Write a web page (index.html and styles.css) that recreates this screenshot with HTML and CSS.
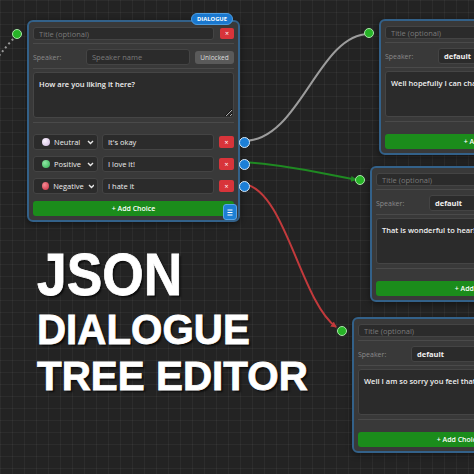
FILE: index.html
```html
<!DOCTYPE html>
<html>
<head>
    <title>JSON Dialogue Tree Editor</title>
    <link rel="stylesheet" href="styles.css">
</head>
<body>

<div class="canvas">
    <svg class="links" width="474" height="474">
        <defs>
            <marker id="arrow-green" viewBox="0 0 6 6" refX="5" refY="3" markerWidth="6" markerHeight="6" markerUnits="userSpaceOnUse" orient="auto">
                <path d="M0 0 L6 3 L0 6 z" fill="#1f8a22"></path>
            </marker>
            <marker id="arrow-red" viewBox="0 0 6 6" refX="5" refY="3" markerWidth="6" markerHeight="6" markerUnits="userSpaceOnUse" orient="auto">
                <path d="M0 0 L6 3 L0 6 z" fill="#c23a3c"></path>
            </marker>
        </defs>
        <path class="link link-in" d="M -4 60 Q 6 46 16 36"></path>
        <path class="link link-neutral" d="M 244 141 C 300 141, 318 34, 369 34"></path>
        <path class="link link-positive" d="M 244 162 C 300 166, 330 176, 356 179.5" marker-end="url(#arrow-green)"></path>
        <path class="link link-negative" d="M 244 184 C 285 190, 300 300, 336 327" marker-end="url(#arrow-red)"></path>
    </svg>

    <div class="node node-start">
        <span class="badge">DIALOGUE</span>
        <span class="port-in"></span>

        <div class="section title-row">
            <input class="field grow" type="text" placeholder="Title (optional)">
            <button class="del">×</button>
        </div>

        <div class="section speaker-row">
            <label class="speaker-label">Speaker:</label>
            <input class="field grow" type="text" placeholder="Speaker name">
            <button class="lock">Unlocked</button>
        </div>

        <div class="section text-row">
            <textarea class="line">How are you liking it here?</textarea>
        </div>

        <div class="choices">
            <div class="choice">
                <div class="mood"><span class="dot dot-neutral"></span>Neutral<svg class="chev" width="7" height="5"><path d="M1 1 L3.5 3.5 L6 1"></path></svg></div>
                <input class="field grow" type="text" value="It's okay">
                <button class="del">×</button>
                <span class="port-out"></span>
            </div>
            <div class="choice">
                <div class="mood"><span class="dot dot-positive"></span>Positive<svg class="chev" width="7" height="5"><path d="M1 1 L3.5 3.5 L6 1"></path></svg></div>
                <input class="field grow" type="text" value="I love it!">
                <button class="del">×</button>
                <span class="port-out"></span>
            </div>
            <div class="choice">
                <div class="mood"><span class="dot dot-negative"></span>Negative<svg class="chev" width="7" height="5"><path d="M1 1 L3.5 3.5 L6 1"></path></svg></div>
                <input class="field grow" type="text" value="I hate it">
                <button class="del">×</button>
                <span class="port-out"></span>
            </div>
            <button class="add">+ Add Choice</button>
        </div>

        <button class="menu">
            <svg width="6" height="7"><path d="M0.5 1 H5.5 M0.5 3.5 H5.5 M0.5 6 H5.5"></path></svg>
        </button>
    </div>

    <div class="node node-hope">
        <span class="port-in"></span>
        <div class="section title-row">
            <input class="field grow" type="text" placeholder="Title (optional)">
            <button class="del">×</button>
        </div>
        <div class="section speaker-row">
            <label class="speaker-label">Speaker:</label>
            <div class="picker">default</div>
        </div>
        <div class="section text-row">
            <textarea class="line">Well hopefully I can change your mind</textarea>
        </div>
        <div class="choices">
            <button class="add">+ Add Choice</button>
        </div>
    </div>

    <div class="node node-glad">
        <span class="port-in"></span>
        <div class="section title-row">
            <input class="field grow" type="text" placeholder="Title (optional)">
            <button class="del">×</button>
        </div>
        <div class="section speaker-row">
            <label class="speaker-label">Speaker:</label>
            <div class="picker">default</div>
        </div>
        <div class="section text-row">
            <textarea class="line">That is wonderful to hear!</textarea>
        </div>
        <div class="choices">
            <button class="add">+ Add Choice</button>
        </div>
    </div>

    <div class="node node-sorry">
        <span class="port-in"></span>
        <div class="section title-row">
            <input class="field grow" type="text" placeholder="Title (optional)">
            <button class="del">×</button>
        </div>
        <div class="section speaker-row">
            <label class="speaker-label">Speaker:</label>
            <div class="picker">default</div>
        </div>
        <div class="section text-row">
            <textarea class="line">Well I am so sorry you feel that way.</textarea>
        </div>
        <div class="choices">
            <button class="add">+ Add Choice</button>
        </div>
    </div>

    <div class="headline">
        <div class="h-json">JSON</div>
        <div class="h-dialogue">DIALOGUE</div>
        <div class="h-tree">TREE EDITOR</div>
    </div>
</div>

</body>
</html>
```

FILE: styles.css
```css
* {
    box-sizing: border-box;
}

body {
    margin: 0;
    background-color: #232323;
    font-family: "Open Sans", "Liberation Sans", sans-serif;
    overflow: hidden;
}

.canvas {
    position: relative;
    width: 474px;
    height: 474px;
    overflow: hidden;
    background-color: #232323;
    background-image:
        linear-gradient(rgba(255, 255, 255, 0.045) 1px, transparent 1px),
        linear-gradient(90deg, rgba(255, 255, 255, 0.045) 1px, transparent 1px);
    background-size: 12px 12px;
}

/* connections */
.links {
    position: absolute;
    left: 0;
    top: 0;
}

.link {
    fill: none;
    stroke-width: 2;
}

.link-in {
    stroke: #9a9a9a;
    stroke-dasharray: 2 3;
}

.link-neutral {
    stroke: #9c9c9c;
}

.link-positive {
    stroke: #1f8a22;
}

.link-negative {
    stroke: #c23a3c;
}

/* nodes */
.node {
    position: absolute;
    width: 213px;
    display: flex;
    flex-direction: column;
    padding: 5px 4px 4px;
    background-color: #393939;
    border: 2px solid #336189;
    border-radius: 6px;
    box-shadow: 0 2px 6px rgba(0, 0, 0, 0.45);
}

.node-start {
    left: 27px;
    top: 20px;
}

.node-hope {
    left: 379px;
    top: 19px;
}

.node-glad {
    left: 370px;
    top: 166px;
}

.node-sorry {
    left: 352px;
    top: 317px;
}

.badge {
    position: absolute;
    top: -9px;
    right: 5px;
    height: 12px;
    padding: 0 5px;
    background-color: #1a78cf;
    border: 1px solid #4d9de0;
    border-radius: 6px;
    color: #fff;
    font-size: 5.8px;
    font-weight: 700;
    line-height: 10px;
}

.port-in {
    position: absolute;
    left: -17px;
    top: 7px;
    width: 10px;
    height: 10px;
    border-radius: 50%;
    background-color: #27b427;
    border: 1.5px solid #a8e6a8;
}

.port-out {
    position: absolute;
    right: -16px;
    top: 2.5px;
    width: 11px;
    height: 11px;
    border-radius: 50%;
    background-color: #1c7fd7;
    border: 1.5px solid #d6e8f7;
}

.section {
    border-bottom: 1px solid #4a4a4a;
}

.title-row {
    display: flex;
    align-items: center;
    gap: 6px;
    height: 17px;
    padding-bottom: 3px;
    flex-shrink: 0;
}

.speaker-row {
    display: flex;
    align-items: center;
    height: 25px;
    padding: 5px 0 3px;
    flex-shrink: 0;
}

.text-row {
    padding: 3px 0 4px;
}

.field {
    height: 100%;
    min-width: 0;
    padding: 0 5px;
    background-color: #2b2b2b;
    border: 1px solid #444;
    border-radius: 3px;
    color: #eee;
    font-family: inherit;
    font-size: 7.5px;
    outline: none;
}

.field::placeholder {
    color: #7a7a7a;
}

.grow {
    flex: 1;
}

.del {
    width: 14px;
    height: 11px;
    padding: 0;
    background-color: #d8343a;
    border: none;
    border-radius: 2px;
    color: #fff;
    font-family: inherit;
    font-size: 7px;
    line-height: 11px;
}

.speaker-label {
    width: 53px;
    color: #8a8a8a;
    font-size: 7px;
}

.lock {
    width: 39px;
    height: 13px;
    margin-left: 5px;
    padding: 0;
    background-color: #5a5a5a;
    border: none;
    border-radius: 3px;
    color: #ddd;
    font-family: inherit;
    font-size: 6.5px;
}

.picker {
    flex: 1;
    height: 100%;
    padding: 0 5px;
    background-color: #2b2b2b;
    border: 1px solid #444;
    border-radius: 3px;
    color: #f2f2f2;
    font-size: 7.5px;
    font-weight: 700;
    line-height: 14px;
}

.line {
    display: block;
    width: 100%;
    height: 46px;
    padding: 6px 5px;
    background-color: #2b2b2b;
    border: 1px solid #454545;
    border-radius: 3px;
    color: #f0f0f0;
    font-family: inherit;
    font-size: 7.5px;
    font-weight: 600;
    outline: none;
    resize: vertical;
}

/* choices */
.choices {
    display: flex;
    flex-direction: column;
    gap: 6px;
    padding-top: 11px;
}

.choice {
    position: relative;
    display: flex;
    align-items: center;
    gap: 4px;
    height: 16px;
}

.choice .del {
    width: 15px;
    height: 12px;
    margin-left: 1px;
}

.mood {
    display: flex;
    align-items: center;
    gap: 4px;
    width: 65px;
    height: 100%;
    padding: 0 3px 0 8px;
    background-color: #2b2b2b;
    border: 1px solid #444;
    border-radius: 3px;
    color: #eee;
    font-size: 7.5px;
}

.dot {
    width: 8px;
    height: 8px;
    border-radius: 50%;
}

.dot-neutral {
    background: radial-gradient(circle at 35% 35%, #fbf4ff, #cdb6dc);
}

.dot-positive {
    background: radial-gradient(circle at 35% 35%, #8fe8a4, #2fae50);
}

.dot-negative {
    background: radial-gradient(circle at 35% 35%, #f58a94, #cc2c3e);
}

.chev {
    margin-left: auto;
}

.chev path {
    fill: none;
    stroke: #e8e8e8;
    stroke-width: 1.4;
}

.add {
    height: 15px;
    margin-top: 1px;
    padding: 0;
    background-color: #1b8c1b;
    border: none;
    border-radius: 3px;
    color: #fff;
    font-family: inherit;
    font-size: 7px;
    font-weight: 600;
}

.menu {
    position: absolute;
    right: 1px;
    bottom: 0;
    width: 14px;
    height: 16px;
    padding: 0;
    display: flex;
    align-items: center;
    justify-content: center;
    background-color: #1d7fd4;
    border: 1px solid #5aa5e6;
    border-radius: 3px;
}

.menu path {
    stroke: #fff;
    stroke-width: 1.2;
}

/* title text */
.headline {
    position: absolute;
    left: 37px;
    top: 242px;
    color: #fff;
    font-family: "Liberation Sans", Arial, sans-serif;
    font-weight: 700;
    white-space: nowrap;
    -webkit-text-stroke: 0.8px #fff;
    text-shadow: 2px 2px 2px rgba(0, 0, 0, 0.7);
}

.h-json {
    font-size: 60px;
    line-height: 65px;
    transform: scaleX(0.89);
    transform-origin: left;
}

.h-dialogue {
    font-size: 42px;
    line-height: 46px;
    transform: scaleX(0.96);
    transform-origin: left;
}

.h-tree {
    font-size: 40px;
    line-height: 46px;
    transform: scaleX(1.01);
    transform-origin: left;
}
```
